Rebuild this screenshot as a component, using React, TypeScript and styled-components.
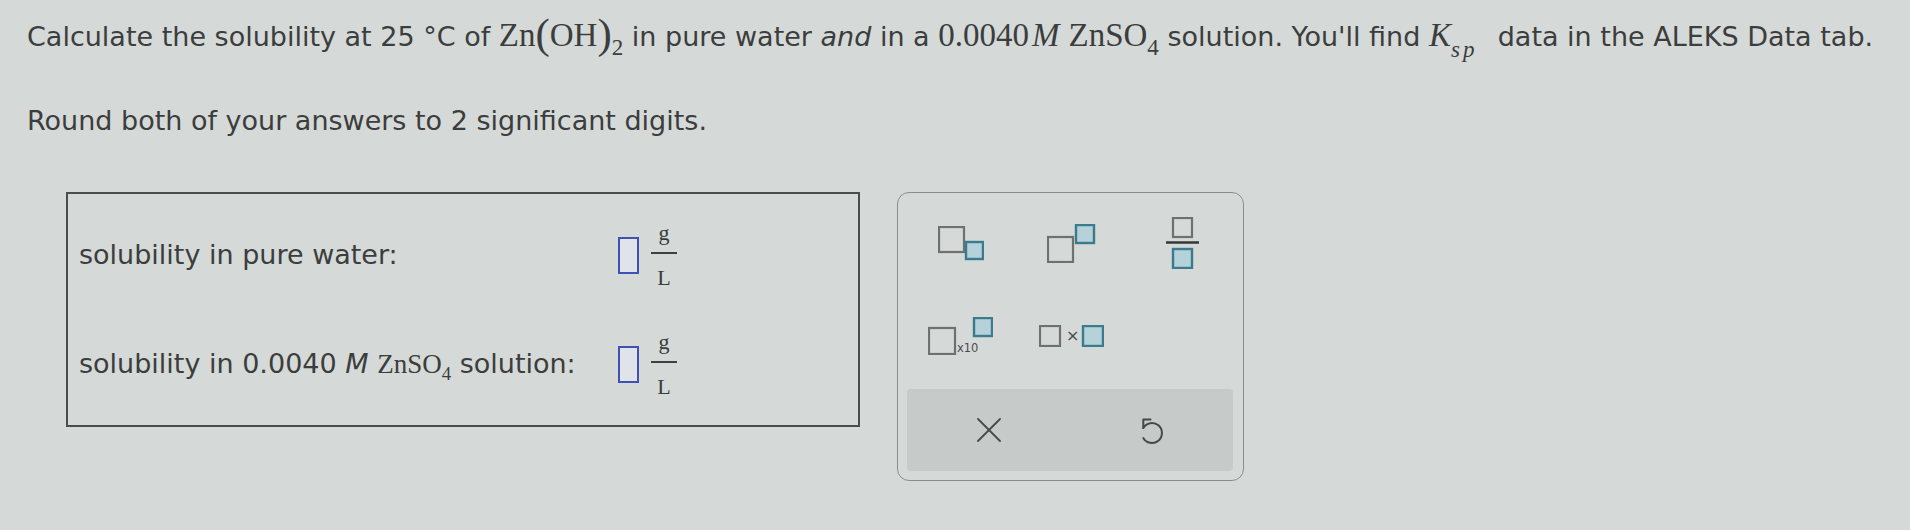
import React from "react"
import styled, { createGlobalStyle } from "styled-components"

const GlobalStyle = createGlobalStyle`
    html, body {
        margin: 0;
        padding: 0;
        background: #d5d9d8;
    }
    body {
        font-family: "DejaVu Sans", Verdana, sans-serif;
        color: #3c3d3d;
    }
`

const Page = styled.div`
    width: 1910px;
    height: 530px;
    box-sizing: border-box;
    padding: 21px 0 0 27px;
    display: flex;
    flex-direction: column;
    overflow: hidden;
`

const Line = styled.div<{ gap?: number }>`
    font-size: 27px;
    line-height: 32px;
    height: 32px;
    white-space: nowrap;
    margin-top: ${p => p.gap ?? 0}px;
`

const Math = styled.span<{ size?: number }>`
    font-family: "Liberation Serif", "Times New Roman", serif;
    font-size: ${p => p.size ?? 33}px;
    line-height: 0;
`

const Paren = styled.span`
    font-size: 1.3em;
    line-height: 0;
    position: relative;
    top: 2px;
`

const Spaced = styled.span<{ left: number }>`
    margin-left: ${p => p.left}px;
`

const Sub = styled.sub<{ drop?: number; track?: number }>`
    font-size: 0.7em;
    line-height: 0;
    vertical-align: -${p => p.drop ?? 9}px;
    letter-spacing: ${p => p.track ?? 0}px;
    margin-right: ${p => p.track ?? 0}px;
`

const AnswerArea = styled.div`
    display: flex;
    align-items: flex-start;
    gap: 37px;
    margin: 55px 0 0 39px;
`

const AnswerBox = styled.div`
    width: 794px;
    height: 235px;
    box-sizing: border-box;
    border: 2px solid #4b4d4d;
    padding: 26px 0 0 11px;
    display: flex;
    flex-direction: column;
    gap: 39px;
`

const AnswerRow = styled.div`
    height: 70px;
    display: grid;
    grid-template-columns: 527px 21px auto;
    column-gap: 12px;
    align-items: center;
`

const Label = styled.div`
    font-size: 27px;
    line-height: 32px;
    white-space: nowrap;
`

const Input = styled.div`
    width: 21px;
    height: 37px;
    box-sizing: border-box;
    border: 2px solid #3f52b3;
    background: #dfe3ea;
`

const Fraction = styled.div`
    display: flex;
    flex-direction: column;
    align-items: center;
    width: 26px;
    font-family: "Liberation Serif", "Times New Roman", serif;
    font-size: 22px;
    line-height: 24px;
    color: #3a3b3b;
`

const Numer = styled.span`
    margin-bottom: 7px;
`

const Denom = styled.span`
    margin-top: 12px;
`

const Bar = styled.div`
    width: 26px;
    height: 2px;
    background: #3f4141;
`

const Keypad = styled.div`
    width: 347px;
    height: 289px;
    box-sizing: border-box;
    border: 1.5px solid #8b8e8e;
    border-radius: 12px;
    padding: 0 8px 0 7px;
    display: flex;
    flex-direction: column;
`

const KeyRow = styled.div<{ h: number }>`
    height: ${p => p.h}px;
    display: grid;
    grid-template-columns: repeat(3, 111px);
    align-items: center;
    justify-items: center;
`

const Key = styled.button`
    border: none;
    background: transparent;
    padding: 0;
    display: flex;
    align-items: center;
    justify-content: center;
    cursor: pointer;
`

const ActionBar = styled.div`
    margin: 10px 2px 0 2px;
    height: 82px;
    border-radius: 4px;
    background: #c6cac9;
    display: grid;
    grid-template-columns: 1fr 1fr;
    align-items: center;
    justify-items: center;
`

const GRAY = "#6f7171"
const TEAL = "#3b7b8e"
const TEAL_FILL = "#b5d1d9"

function Slot({ x, y, s, teal }: { x: number; y: number; s: number; teal?: boolean }) {
    return (
        <rect
            x={x}
            y={y}
            width={s}
            height={s}
            fill={teal ? TEAL_FILL : "none"}
            stroke={teal ? TEAL : GRAY}
            strokeWidth={teal ? 2.4 : 2.2}
        />
    )
}

const SubscriptIcon = () => (
    <svg width="46" height="35" viewBox="0 0 46 35">
        <Slot x={1} y={1} s={25} />
        <Slot x={28} y={16} s={17} teal />
    </svg>
)

const SuperscriptIcon = () => (
    <svg width="49" height="39" viewBox="0 0 49 39">
        <Slot x={1} y={13} s={25} />
        <Slot x={29} y={1} s={18} teal />
    </svg>
)

const FractionIcon = () => (
    <svg width="33" height="52" viewBox="0 0 33 52">
        <Slot x={7} y={1} s={19} />
        <line x1="0" y1="25.5" x2="33" y2="25.5" stroke="#353737" strokeWidth="2.4" />
        <Slot x={7} y={32} s={19} teal />
    </svg>
)

const SciIcon = () => (
    <svg width="65" height="38" viewBox="0 0 65 38">
        <Slot x={1} y={11} s={26} />
        <text x="29" y="35" fontFamily="DejaVu Sans, sans-serif" fontSize="11.5" fill="#4a4c4c">x10</text>
        <Slot x={46} y={1} s={18} teal />
    </svg>
)

const TimesIcon = () => (
    <svg width="65" height="22" viewBox="0 0 65 22">
        <Slot x={1} y={1} s={20} />
        <text x="27" y="16" fontFamily="DejaVu Sans, sans-serif" fontSize="16" fill="#4a4c4c">×</text>
        <Slot x={44} y={1} s={20} teal />
    </svg>
)

const ClearIcon = () => (
    <svg width="24" height="24" viewBox="0 0 24 24" fill="none" stroke="#474949" strokeWidth="1.8" strokeLinecap="round">
        <line x1="1" y1="1" x2="23" y2="23" />
        <line x1="23" y1="1" x2="1" y2="23" />
    </svg>
)

const UndoIcon = () => (
    <svg width="27" height="31" viewBox="0 0 27 31" fill="none" stroke="#474949" strokeWidth="2" strokeLinecap="round" strokeLinejoin="round">
        <path d="M5.3 13 A10 10 0 1 1 5.3 23" />
        <path d="M5.3 13 V4.5 H12.5" />
    </svg>
)

function AnswerLine({ label }: { label: React.ReactNode }) {
    return (
        <AnswerRow>
            <Label>{label}</Label>
            <Input />
            <Fraction>
                <Numer>g</Numer>
                <Bar />
                <Denom>L</Denom>
            </Fraction>
        </AnswerRow>
    )
}

export default function App() {
    return (
        <>
            <GlobalStyle />
            <Page>
                <Line>
                    Calculate the solubility at 25 °C of{" "}
                    <Math>
                        Zn<Paren>(</Paren>OH<Paren>)</Paren>
                        <Sub>2</Sub>
                    </Math>{" "}
                    in pure water <i>and</i> in a{" "}
                    <Math>
                        0.0040<Spaced left={3}><i>M</i></Spaced>
                        <Spaced left={9}>ZnSO</Spaced>
                        <Sub>4</Sub>
                    </Math>{" "}
                    solution. You'll find{" "}
                    <Math>
                        <i>K</i>
                        <Sub drop={11} track={3}>
                            <i>sp</i>
                        </Sub>
                    </Math>
                    {"  "}&nbsp;data in the ALEKS Data tab.
                </Line>
                <Line gap={52}>Round both of your answers to 2 significant digits.</Line>
                <AnswerArea>
                    <AnswerBox>
                        <AnswerLine label="solubility in pure water:" />
                        <AnswerLine
                            label={
                                <>
                                    solubility in 0.0040 <i>M</i>{" "}
                                    <Math size={27}>
                                        ZnSO<Sub drop={7}>4</Sub>
                                    </Math>{" "}
                                    solution:
                                </>
                            }
                        />
                    </AnswerBox>
                    <Keypad>
                        <KeyRow h={100}>
                            <Key><SubscriptIcon /></Key>
                            <Key><SuperscriptIcon /></Key>
                            <Key><FractionIcon /></Key>
                        </KeyRow>
                        <KeyRow h={86}>
                            <Key><SciIcon /></Key>
                            <Key><TimesIcon /></Key>
                        </KeyRow>
                        <ActionBar>
                            <Key><ClearIcon /></Key>
                            <Key><UndoIcon /></Key>
                        </ActionBar>
                    </Keypad>
                </AnswerArea>
            </Page>
        </>
    )
}
